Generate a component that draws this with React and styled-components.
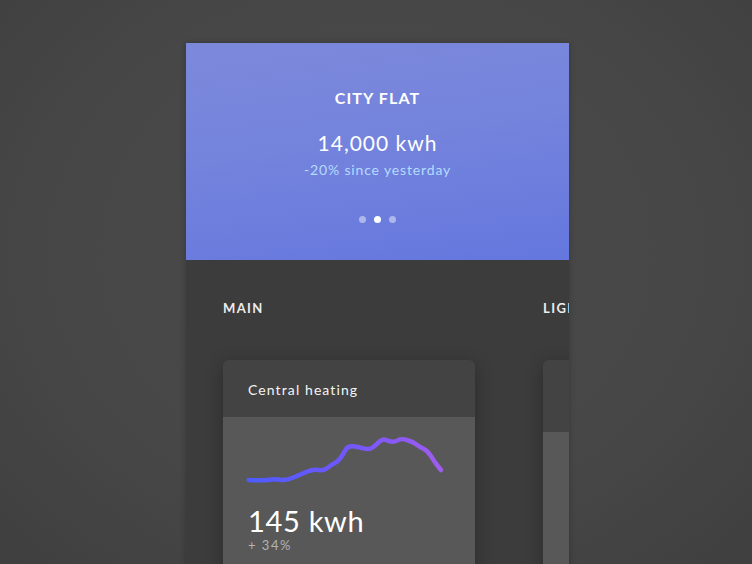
import React from 'react'
import styled, { createGlobalStyle } from 'styled-components'

const GlobalStyle = createGlobalStyle`
html, body {
  margin: 0;
  height: 100%;
}
body {
  background: radial-gradient(ellipse at 50% 45%, #4a4a4a 0%, #474747 60%, #3f3f3f 100%);
  font-family: Lato, "Open Sans", sans-serif;
  overflow: hidden;
}
`

const Stage = styled.div`
width: 752px;
height: 564px;
padding-top: 43px;
padding-left: 186px;
box-sizing: border-box;
overflow: hidden;
`

const Phone = styled.div`
width: 383px;
height: 540px;
background: #3c3c3c;
box-shadow: 0 0 6px rgba(0, 0, 0, 0.25);
overflow: hidden;
`

const Hero = styled.header`
height: 217px;
box-sizing: border-box;
padding-top: 45px;
display: flex;
flex-direction: column;
align-items: center;
color: #fff;
background: linear-gradient(172deg, #7c89db 0%, #7483dc 45%, #6477de 100%);
`

const Place = styled.h1`
margin: 0;
font-size: 16px;
line-height: 20px;
font-weight: 700;
letter-spacing: 1.1px;
`

const Total = styled.div`
margin-top: 22px;
font-size: 21px;
line-height: 26px;
font-weight: 400;
letter-spacing: 1px;
`

const Delta = styled.div`
margin-top: 5px;
font-size: 14px;
line-height: 18px;
letter-spacing: 0.85px;
color: #b4dcff;
`

const Dots = styled.div`
margin-top: 37px;
display: flex;
gap: 8px;
`

const Dot = styled.span`
width: 7px;
height: 7px;
border-radius: 50%;
background: ${p => (p.$active ? '#ffffff' : 'rgba(255, 255, 255, 0.45)')};
`

const Rooms = styled.div`
display: flex;
gap: 68px;
padding: 40px 0 0 37px;
`

const Column = styled.section`
flex: 0 0 252px;
`

const Label = styled.h2`
margin: 0 0 44px;
font-size: 13px;
line-height: 16px;
font-weight: 700;
letter-spacing: 1.4px;
color: #ededed;
`

const Card = styled.div`
border-radius: 6px;
background: #434343;
box-shadow: 0 4px 18px rgba(0, 0, 0, 0.28);
overflow: hidden;
`

const CardHead = styled.div`
height: ${p => p.$tall ? 72 : 57}px;
box-sizing: border-box;
padding: 21px 25px 0;
font-size: 14px;
line-height: 18px;
letter-spacing: 1.1px;
color: #f4f4f4;
`

const CardBody = styled.div`
height: 200px;
background: #585858;
`

const Chart = styled.svg`
display: block;
`

const Value = styled.div`
margin: 16px 0 0 25px;
font-size: 29px;
line-height: 32px;
font-weight: 400;
letter-spacing: 0.7px;
color: #fff;
`

const Change = styled.div`
margin-left: 25px;
font-size: 13px;
line-height: 16px;
letter-spacing: 1.5px;
color: #b3b3b3;
`

const usage = [
  [25.7, 63], [41.3, 63.7], [51.3, 61.7], [63, 63.7], [78, 57.3], [89.7, 52.3],
  [101.3, 53.7], [108, 48], [114.7, 44.7], [119.7, 38], [124.7, 28.7], [134.7, 29.7],
  [146.3, 33], [153, 28], [159.7, 21.3], [166.3, 24.7], [173, 24.7], [178, 21.3],
  [189.7, 24.7], [196.3, 29.7], [204.7, 33.7], [211.3, 44.7], [218, 53]
]

// midpoints joined by quadratic curves keep the line soft at the corners
function linePath(points) {
  let d = `M${points[0][0]} ${points[0][1]}`
  for (let i = 1; i < points.length - 1; i++) {
    const [x, y] = points[i]
    const [nx, ny] = points[i + 1]
    d += ` Q${x} ${y} ${(x + nx) / 2} ${(y + ny) / 2}`
  }
  const last = points[points.length - 1]
  return d + ` L${last[0]} ${last[1]}`
}

export default function App() {
  return (
    <>
      <GlobalStyle />
      <Stage>
        <Phone>
          <Hero>
            <Place>CITY FLAT</Place>
            <Total>14,000 kwh</Total>
            <Delta>-20% since yesterday</Delta>
            <Dots>
              <Dot />
              <Dot $active />
              <Dot />
            </Dots>
          </Hero>
          <Rooms>
            <Column>
              <Label>MAIN</Label>
              <Card>
                <CardHead>Central heating</CardHead>
                <CardBody>
                  <Chart width="252" height="72" viewBox="0 0 252 72">
                    <defs>
                      <linearGradient id="usage" x1="0" x2="1" y1="0" y2="0">
                        <stop offset="0" stopColor="#4e5cff" />
                        <stop offset="0.5" stopColor="#7057fb" />
                        <stop offset="1" stopColor="#a05cf0" />
                      </linearGradient>
                    </defs>
                    <path
                      d={linePath(usage)}
                      fill="none"
                      stroke="url(#usage)"
                      strokeWidth="4.5"
                      strokeLinecap="round"
                      strokeLinejoin="round"
                    />
                  </Chart>
                  <Value>145 kwh</Value>
                  <Change>+ 34%</Change>
                </CardBody>
              </Card>
            </Column>
            <Column>
              <Label>LIGHTING</Label>
              <Card>
                <CardHead $tall />
                <CardBody />
              </Card>
            </Column>
          </Rooms>
        </Phone>
      </Stage>
    </>
  )
}
